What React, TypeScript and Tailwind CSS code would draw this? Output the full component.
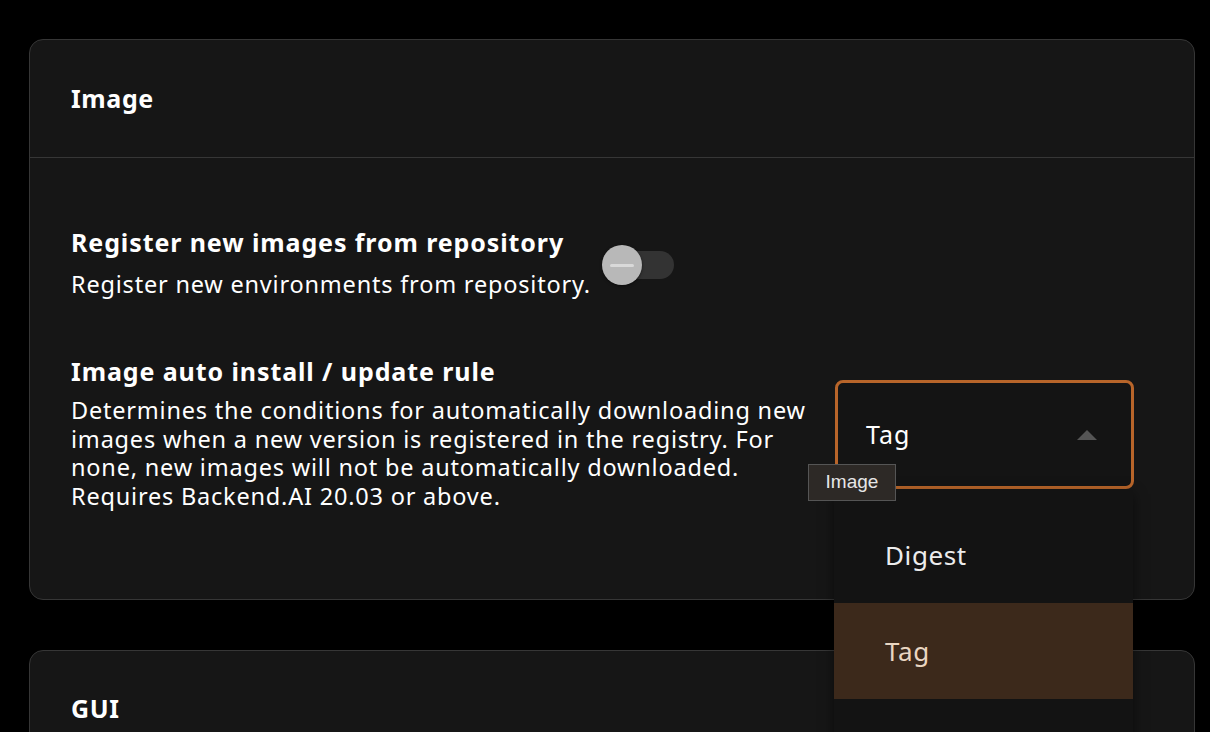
import React from "react";

const font = { fontFamily: "'Noto Sans', 'Open Sans', sans-serif" };

export default function App() {
  return (
    <div className="min-h-[732px] h-[732px] overflow-hidden bg-black pl-[29px] pt-[39px] text-white" style={font}>
      <div className="w-[1166px] flex flex-col gap-[50px]">
        {/* Card 1 */}
        <div className="relative rounded-[14px] border border-[#363636] bg-[#161616] h-[561px]">
          <div className="h-[118px] flex items-center pl-[41px] border-b border-[#363636]">
            <span className="text-[25px] font-bold leading-none tracking-[0.6px]">Image</span>
          </div>
          <div className="pl-[41px] pt-[67px] flex flex-col">
            {/* Row 1 */}
            <div className="flex items-center">
              <div className="flex flex-col">
                <span className="text-[25px] font-bold leading-[34px] whitespace-nowrap tracking-[0.9px]">Register new images from repository</span>
                <span className="text-[23.5px] leading-[42px] mt-[4px] whitespace-nowrap tracking-[0.8px]">Register new environments from repository.</span>
              </div>
              <div className="relative ml-[11px] w-[72px] h-[40px] flex items-center">
                <div className="absolute left-[20px] w-[52px] h-[28px] rounded-full bg-[#333333]" />
                <div className="absolute left-0 top-0 w-[40px] h-[40px] rounded-full bg-[#b8b8b8] flex items-center justify-center shadow-[0_1px_3px_rgba(0,0,0,0.5)]">
                  <div className="w-[24px] h-[3px] bg-[#d9d9d9] rounded-sm" />
                </div>
              </div>
            </div>
            {/* Row 2 */}
            <div className="flex items-center mt-[49px]">
              <div className="flex flex-col w-[764px]">
                <span className="text-[25px] font-bold leading-[34px] whitespace-nowrap tracking-[0.9px]">Image auto install / update rule</span>
                <div className="text-[23.5px] leading-[28.5px] mt-[8px] flex flex-col tracking-[0.8px]">
                  <span className="whitespace-nowrap">Determines the conditions for automatically downloading new</span>
                  <span className="whitespace-nowrap">images when a new version is registered in the registry. For</span>
                  <span className="whitespace-nowrap">none, new images will not be automatically downloaded.</span>
                  <span className="whitespace-nowrap">Requires Backend.AI 20.03 or above.</span>
                </div>
              </div>
              <div className="relative mt-[5px] w-[299px] h-[109px] rounded-[8px] border-[3px] border-[#b8652a] bg-[#141414] flex items-center pl-[28px] pr-[34px] justify-between">
                <span className="text-[25px] tracking-[1px]">Tag</span>
                <svg width="20" height="10" viewBox="0 0 20 10">
                  <polygon points="10,0 20,10 0,10" fill="#555555" />
                </svg>
              </div>
            </div>
          </div>
        </div>
        {/* Card 2 */}
        <div className="rounded-[14px] border border-[#363636] bg-[#161616] h-[200px]">
          <div className="h-[114px] flex items-center pl-[41px]">
            <span className="text-[25px] font-bold leading-none tracking-[0.6px]">GUI</span>
          </div>
        </div>
      </div>

      {/* Dropdown menu overlay */}
      <div className="absolute left-[834px] top-[490px] w-[299px] h-[260px] bg-[#131313] shadow-[0_4px_12px_rgba(0,0,0,0.5)] pt-[18px]">
        <div className="h-[95px] flex items-center pl-[51px] text-[26px] text-[#ececec] tracking-[0.6px]">Digest</div>
        <div className="h-[96px] flex items-center pl-[51px] text-[26px] bg-[#3c291b] text-[#ead6c2] tracking-[0.6px]">Tag</div>
      </div>

      {/* Tooltip */}
      <div
        className="absolute left-[808px] top-[464px] w-[88px] h-[37px] bg-[#2d2926] border border-[#555] flex items-center justify-center text-[19px] text-[#e6e6e6]"
        style={{ fontFamily: "'Liberation Sans', Arial, sans-serif" }}
      >
        Image
      </div>
    </div>
  );
}
